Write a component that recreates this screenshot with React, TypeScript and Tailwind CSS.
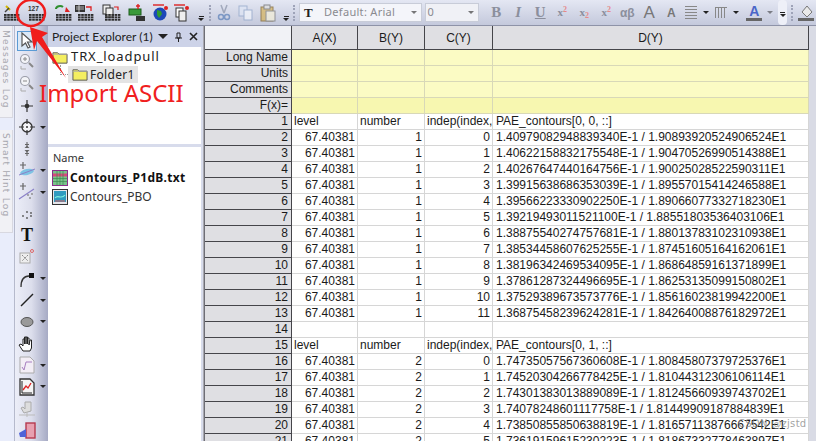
import React from "react";

const rows1 = [
  "1.40979082948839340E-1 / 1.90893920524906524E1",
  "1.40622158832175548E-1 / 1.90470526990514388E1",
  "1.40267647440164756E-1 / 1.90025028522590311E1",
  "1.39915638686353039E-1 / 1.89557015414246588E1",
  "1.39566223330902250E-1 / 1.89066077332718230E1",
  "1.39219493011521100E-1 / 1.88551803536403106E1",
  "1.38875540274757681E-1 / 1.88013783102310938E1",
  "1.38534458607625255E-1 / 1.87451605164162061E1",
  "1.38196342469534095E-1 / 1.86864859161371899E1",
  "1.37861287324496695E-1 / 1.86253135099150802E1",
  "1.37529389673573776E-1 / 1.85616023819942200E1",
  "1.36875458239624281E-1 / 1.84264008876182972E1",
];

const rows2 = [
  "1.74735057567360608E-1 / 1.80845807379725376E1",
  "1.74520304266778425E-1 / 1.81044312306106114E1",
  "1.74301383013889089E-1 / 1.81245660939743702E1",
  "1.74078248601117758E-1 / 1.81449909187884839E1",
  "1.73850855850638819E-1 / 1.81657113876667542E1",
  "1.73619159615230223E-1 / 1.81867332778463897E1",
];

function Row({ head, a, b, c, d, textA }: { head: string; a?: string; b?: string; c?: string; d?: string; textA?: boolean }) {
  const align = textA ? "text-left pl-[2px]" : "text-right pr-[2px]";
  return (
    <div className="flex h-[16px] leading-[15px] text-[12px] text-[#1a1a1a]">
      <div className="w-[87px] shrink-0 bg-[#dfdfe3] border-b border-r border-[#45454a] text-right pr-[3px]">{head}</div>
      <div className={`w-[66px] shrink-0 border-b border-r border-[#d6d6d6] ${align} whitespace-nowrap`}>{a}</div>
      <div className={`w-[67px] shrink-0 border-b border-r border-[#d6d6d6] ${align} whitespace-nowrap`}>{b}</div>
      <div className={`w-[68px] shrink-0 border-b border-r border-[#d6d6d6] ${align} whitespace-nowrap overflow-hidden`}>{c}</div>
      <div className="w-[316px] shrink-0 border-b border-r border-[#d6d6d6] pl-[3px] whitespace-nowrap overflow-hidden">{d}</div>
      <div className="flex-1 bg-[#d9dbe5]" />
    </div>
  );
}

function LabelRow({ head, strong }: { head: string; strong?: boolean }) {
  const cell = `shrink-0 border-b border-r border-[#d8d8b8] ${strong ? "bg-[#f7f7b0]" : "bg-[#fbfbc4]"}`;
  return (
    <div className="flex h-[16px] leading-[15px] text-[#1a1a1a]">
      <div className="w-[87px] shrink-0 bg-[#dfdfe3] border-b border-r border-[#45454a] text-right pr-[3px] text-[12px]">{head}</div>
      <div className={`w-[66px] ${cell}`} />
      <div className={`w-[67px] ${cell}`} />
      <div className={`w-[68px] ${cell}`} />
      <div className={`w-[316px] ${cell}`} />
      <div className="flex-1 bg-[#d9dbe5]" />
    </div>
  );
}

function ColHead({ label, w }: { label: string; w: string }) {
  return (
    <div className={`${w} shrink-0 bg-[#dfdfe3] border-b border-r border-[#45454a] flex items-center justify-center text-[12px] text-[#1a1a1a]`}>
      {label}
    </div>
  );
}

function MiniGrid({ x = 2, y = 11 }: { x?: number; y?: number }) {
  return (
    <g fill="#2d2d2d">
      {[0, 1, 2].map((r) =>
        [0, 1, 2, 3, 4].map((c) => <rect key={`${r}-${c}`} x={x + c * 3.2} y={y + r * 2.4} width="2.6" height="1.9" />),
      )}
    </g>
  );
}

function Ico({ children, className = "" }: { children: React.ReactNode; className?: string }) {
  return (
    <svg width="20" height="20" viewBox="0 0 20 20" className={`shrink-0 ${className}`}>
      {children}
    </svg>
  );
}

function Caret() {
  return <div className="w-0 h-0 border-x-[3px] border-x-transparent border-t-[3px] border-t-[#222]" />;
}

function Gripper() {
  return <div className="w-[2px] h-[16px] shrink-0 border-l-2 border-dotted border-[#9ea3b8]" />;
}

function Overflow({ className = "" }: { className?: string }) {
  return (
    <div className={`flex flex-col items-center gap-[1px] mt-[12px] ${className}`}>
      <div className="w-[5px] h-[1px] bg-[#222]" />
      <Caret />
    </div>
  );
}

function ToolSlot({ children, caret, selected }: { children: React.ReactNode; caret?: boolean; selected?: boolean }) {
  return (
    <div className="h-[22px] flex items-center relative pl-[2px]">
      <div className={`w-[20px] h-[20px] flex items-center justify-center ${selected ? "border border-[#5b9bd5] bg-[#dbe8f6]" : ""}`}>{children}</div>
      {caret && (
        <div className="ml-[3px]">
          <Caret />
        </div>
      )}
    </div>
  );
}

function TopToolbar() {
  return (
    <div className="h-[26px] shrink-0 flex items-center bg-gradient-to-b from-[#e4e7f3] to-[#c4c9dc] border-b border-[#8e93a8] overflow-hidden">
      <div className="flex items-center pl-[2px]">
        <Ico>
          <path d="M4 3 L8 7" stroke="#d4b800" strokeWidth="2" />
          <path d="M3 9 L7 5" stroke="#444" strokeWidth="1.5" />
          <MiniGrid x={2} y={11} />
        </Ico>
        <Ico className="ml-[5px]">
          <text x="1" y="8" fontSize="6.5" fontWeight="700" fill="#333" fontFamily="Liberation Sans, sans-serif">127</text>
          <MiniGrid x={2} y={11} />
        </Ico>
        <Ico className="ml-[6px]">
          <path d="M3 6 a4 3 0 0 1 7 -2" fill="none" stroke="#2f8f2f" strokeWidth="2" />
          <path d="M13 4 L17 9 L12 9Z" fill="#d22" />
          <MiniGrid x={3} y={11} />
        </Ico>
        <Ico className="ml-[1px]">
          <rect x="1" y="2" width="10" height="7" fill="#333" />
          <path d="M2 4h8M2 6h8M5 2v7" stroke="#eee" strokeWidth=".7" />
          <path d="M12 4h5v4" fill="none" stroke="#d22" strokeWidth="1.3" />
          <MiniGrid x={4} y={11} />
        </Ico>
        <Ico className="ml-[7px]">
          <rect x="2" y="2" width="7" height="9" fill="#eee" stroke="#333" />
          <rect x="5" y="5" width="7" height="9" fill="#eee" stroke="#333" />
          <path d="M13 4h4v3" fill="none" stroke="#d22" strokeWidth="1.2" />
          <MiniGrid x={4} y={11} />
        </Ico>
        <Ico className="ml-[7px]">
          <rect x="1" y="6" width="12" height="6" fill="#3a9a3a" stroke="#1d5c1d" />
          <rect x="8" y="13" width="9" height="5" fill="#333" />
          <path d="M10 1v5M8 3h4" stroke="#d22" strokeWidth="1.4" />
        </Ico>
        <Ico className="ml-[3px]">
          <circle cx="9" cy="11" r="6.500" fill="#1c49b8" />
          <path d="M6 7l4 1 1 3-3 4-2-3z" fill="#2f9a2f" />
          <path d="M2 2h11" stroke="#d22" strokeWidth="1.4" />
          <circle cx="15" cy="5" r="2" fill="#d22" />
        </Ico>
        <Ico className="ml-[1px]">
          <rect x="4" y="5" width="7" height="9" fill="#fff" stroke="#333" />
          <rect x="7" y="8" width="7" height="10" fill="#eee" stroke="#333" />
          <path d="M2 2h11" stroke="#d22" strokeWidth="1.4" />
          <circle cx="15" cy="5" r="2" fill="#d22" />
        </Ico>
        <Overflow className="ml-[6px]" />
      </div>
      <div className="ml-[5px]">
        <Gripper />
      </div>
      <div className="flex items-center ml-[3px] gap-[2px] opacity-70">
        <Ico>
          <path d="M7 2l3 8M13 2l-3 8" stroke="#8a93a8" strokeWidth="1.5" />
          <circle cx="7" cy="14" r="2.500" fill="none" stroke="#5a7fb8" strokeWidth="1.5" />
          <circle cx="13" cy="14" r="2.500" fill="none" stroke="#5a7fb8" strokeWidth="1.5" />
        </Ico>
        <Ico>
          <rect x="3" y="3" width="8" height="10" fill="#dfe6f5" stroke="#8ea3c8" />
          <rect x="8" y="7" width="8" height="10" fill="#f3f6fc" stroke="#8ea3c8" />
        </Ico>
        <Ico>
          <rect x="3" y="4" width="12" height="14" fill="#d6b35a" stroke="#7a5d20" />
          <rect x="6" y="2" width="6" height="4" fill="#ddd" stroke="#666" />
          <rect x="8" y="8" width="9" height="10" fill="#f5f0d8" stroke="#777" />
        </Ico>
      </div>
      <Overflow className="ml-[5px]" />
      <div className="ml-[4px]">
        <Gripper />
      </div>
      <div className="ml-[4px] w-[126px] h-[19px] bg-[#f4f5fa] border border-[#c8ccd8] flex items-center text-[11px] text-[#8a8a90] font-['Noto_Sans',sans-serif]">
        <span className="w-[20px] ml-[4px] font-['Liberation_Serif',serif] font-bold text-[13px] text-[#222]">T</span>
        <span className="flex-1 tracking-[0.3px]">Default: Arial</span>
        <div className="mr-[4px] opacity-60">
          <Caret />
        </div>
      </div>
      <div className="ml-[3px] w-[56px] h-[19px] bg-[#f0f1f6] border border-[#c8ccd8] flex items-center justify-between pl-[2px] pr-[4px] text-[11px] text-[#8a8a90]">
        0
        <div className="opacity-60">
          <Caret />
        </div>
      </div>
      <div className="flex items-center ml-[6px] text-[#8b8f9d] font-['Liberation_Serif',serif] font-bold">
        <span className="w-[22px] text-center text-[15px]">B</span>
        <span className="w-[22px] text-center text-[15px] italic">I</span>
        <span className="w-[22px] text-center text-[15px] underline">U</span>
        <span className="w-[22px] text-center text-[11px]">x<sup className="text-[#e58a8a] text-[8px]">2</sup></span>
        <span className="w-[22px] text-center text-[11px]">x<sub className="text-[#e58a8a] text-[8px]">2</sub></span>
        <span className="w-[22px] text-center text-[11px]">x<sup className="text-[#e58a8a] text-[8px]">2</sup></span>
        <span className="w-[20px] text-center text-[12px] font-['Liberation_Sans',sans-serif]">αβ</span>
        <span className="w-[24px] text-center text-[17px] text-[#777] font-['Liberation_Sans',sans-serif] font-normal">A</span>
        <span className="w-[20px] text-center text-[12px] text-[#777] font-['Liberation_Sans',sans-serif]">A</span>
      </div>
      <div className="flex items-center ml-[4px] gap-[6px]">
        <div className="flex flex-col gap-[2px] w-[12px]">
          <div className="h-[1px] bg-[#888]" />
          <div className="h-[1px] bg-[#888]" />
          <div className="h-[1px] bg-[#888]" />
          <div className="h-[1px] bg-[#888]" />
          <div className="h-[1px] bg-[#888]" />
        </div>
        <Caret />
      </div>
      <div className="flex items-center ml-[6px] gap-[6px]">
        <div className="w-[12px] h-[11px] border-t border-[#888] bg-[repeating-linear-gradient(90deg,#888_0,#888_1px,transparent_1px,transparent_3px)]" />
        <Caret />
      </div>
      <div className="flex items-center ml-[7px] gap-[5px]">
        <div className="flex flex-col items-center">
          <span className="text-[14px] leading-[13px] font-bold text-[#4a66c8] font-['Liberation_Sans',sans-serif]">A</span>
          <div className="w-[16px] h-[3px] bg-[#666]" />
        </div>
        <div className="opacity-50">
          <Caret />
        </div>
      </div>
      <div className="ml-[5px] w-[9px] h-full flex justify-center rounded-sm bg-[#eef0f8]">
        <Overflow />
      </div>
      <div className="ml-[4px]">
        <Gripper />
      </div>
      <Ico className="ml-[3px]">
        <path d="M6 9l5-6 5 6-5 5z" fill="#e9e9e9" stroke="#777" />
        <rect x="2" y="15" width="16" height="3" fill="#666" />
      </Ico>
    </div>
  );
}

function SideToolbar() {
  const bar = "#333";
  return (
    <div className="w-[34px] shrink-0 flex flex-col pt-[4px] bg-gradient-to-r from-[#eceef8] via-[#dcdeec] to-[#a6aac4] border-l border-[#b6bacc] overflow-hidden">
      <ToolSlot selected>
        <svg width="16" height="18" viewBox="0 0 16 18">
          <path d="M3 1 L3 14 L6.500 11 L9 16 L11 15 L8.500 10 L13 10 Z" fill="#fff" stroke="#555" strokeWidth="1.2" />
        </svg>
      </ToolSlot>
      <ToolSlot>
        <Ico>
          <circle cx="8" cy="7" r="4.500" fill="#f3f4f8" stroke="#9a9da8" strokeWidth="1.2" />
          <path d="M6 7h4M8 5v4" stroke="#888" />
          <path d="M12 11l4 4" stroke="#888" strokeWidth="2" />
          <path d="M4 14v3h5" fill="none" stroke="#aaa" />
        </Ico>
      </ToolSlot>
      <ToolSlot>
        <Ico>
          <circle cx="8" cy="7" r="4.500" fill="#f3f4f8" stroke="#9a9da8" strokeWidth="1.2" />
          <path d="M6 7h4" stroke="#888" />
          <path d="M12 11l4 4" stroke="#888" strokeWidth="2" />
          <path d="M4 14v3h5" fill="none" stroke="#aaa" />
        </Ico>
      </ToolSlot>
      <ToolSlot>
        <Ico>
          <path d="M10 4v12M4 10h12" stroke={bar} strokeWidth="1.2" />
          <circle cx="10" cy="10" r="2.300" fill={bar} />
        </Ico>
      </ToolSlot>
      <ToolSlot caret>
        <Ico>
          <circle cx="10" cy="10" r="5" fill="#f4f4f8" stroke={bar} strokeWidth="1.3" />
          <path d="M10 2v5M10 13v5M2 10h5M13 10h5" stroke={bar} strokeWidth="1.2" />
          <circle cx="10" cy="10" r="1" fill={bar} />
        </Ico>
      </ToolSlot>
      <ToolSlot>
        <Ico>
          <path d="M10 3v5M8 5.500h4M10 12v5M8 14.500h4" stroke="#666" strokeWidth="1.1" />
          <path d="M7.500 9h5L10 6.500zM7.500 11h5L10 13.500z" fill="#666" />
        </Ico>
      </ToolSlot>
      <ToolSlot caret>
        <Ico>
          <path d="M6 1v7M3 4h6" stroke="#666" strokeWidth="1.2" />
          <ellipse cx="10" cy="11" rx="7" ry="3" fill="#7ec3e4" transform="rotate(-12 10 11)" />
          <path d="M2 14l16-6" stroke="#8a80c8" />
        </Ico>
      </ToolSlot>
      <ToolSlot caret>
        <Ico>
          <path d="M6 1v7M3 4h6" stroke="#666" strokeWidth="1.2" />
          <path d="M2 17l15-10" stroke="#8a80c8" strokeWidth="1.1" />
          <circle cx="11" cy="13" r=".9" fill="#888" />
          <circle cx="15" cy="12" r=".9" fill="#888" />
          <circle cx="13" cy="16" r=".9" fill="#888" />
        </Ico>
      </ToolSlot>
      <ToolSlot>
        <Ico>
          <circle cx="6" cy="12" r=".9" fill="#555" />
          <circle cx="10" cy="8" r=".9" fill="#555" />
          <circle cx="10" cy="14" r=".9" fill="#555" />
          <circle cx="14" cy="9" r=".9" fill="#555" />
          <circle cx="14" cy="12" r=".9" fill="#555" />
        </Ico>
      </ToolSlot>
      <ToolSlot>
        <span className="font-['Liberation_Serif',serif] font-bold text-[18px] leading-none text-[#111]">T</span>
      </ToolSlot>
      <ToolSlot>
        <Ico>
          <rect x="3" y="6" width="10" height="10" fill="#eee" stroke="#aaa" />
          <path d="M5 8l6 6M11 8l-6 6" stroke="#888" strokeDasharray="2 1" />
          <circle cx="15" cy="4" r="1.500" fill="none" stroke="#d66" />
        </Ico>
      </ToolSlot>
      <ToolSlot caret>
        <Ico>
          <path d="M4 18c0-7 3-11 8-11" fill="none" stroke="#333" strokeWidth="1.3" />
          <rect x="12" y="4" width="5" height="5" fill="#111" />
        </Ico>
      </ToolSlot>
      <ToolSlot caret>
        <Ico>
          <path d="M4 16L16 4" stroke="#222" strokeWidth="1.4" />
        </Ico>
      </ToolSlot>
      <ToolSlot caret>
        <Ico>
          <ellipse cx="10" cy="10" rx="6" ry="4.500" fill="#9a9a9a" stroke="#555" />
        </Ico>
      </ToolSlot>
      <ToolSlot>
        <Ico>
          <path d="M6 17l-4-6 2-1 2 2V5h1.500v5V3H9v7V3h1.500v7V4H12v7l1-5h1.500v8l-1.500 3z" fill="#fff" stroke="#222" strokeWidth="1" />
        </Ico>
      </ToolSlot>
      <ToolSlot caret>
        <Ico>
          <path d="M3 2h10l4 4v12H3z" fill="#f3eef6" stroke="#aaa" />
          <path d="M5 12l2 3 2-8h6" fill="none" stroke="#a77ec0" />
        </Ico>
      </ToolSlot>
      <ToolSlot caret>
        <Ico>
          <path d="M3 2h10l4 4v12H3z" fill="#f4f4f4" stroke="#333" strokeWidth="1.3" />
          <path d="M5 4v12h10" fill="none" stroke="#222" />
          <path d="M6 13l3-4 2 2 3-5" fill="none" stroke="#d22" strokeWidth="1.3" />
        </Ico>
      </ToolSlot>
      <ToolSlot>
        <Ico>
          <path d="M7 15l-3-5 2-1 2 2V4h6v9z" fill="#ddd" stroke="#aaa" />
          <path d="M2 17h16M10 14v5" stroke="#bbb" />
        </Ico>
      </ToolSlot>
      <ToolSlot>
        <Ico>
          <rect x="9" y="3" width="9" height="15" fill="#e7a0b0" stroke="#b5394f" strokeWidth="1.4" />
          <path d="M2 13l7-4v8H3z" fill="#4f63d8" />
        </Ico>
      </ToolSlot>
    </div>
  );
}

function FolderIcon() {
  return (
    <svg width="16" height="13" viewBox="0 0 17 13" className="shrink-0">
      <path d="M1 3V1.500h5L7.500 3H16v9.500H1z" fill="#f4ee60" stroke="#555" strokeWidth="1" />
      <path d="M1 3h15" stroke="#aaa" strokeWidth="1" />
    </svg>
  );
}

function Explorer() {
  return (
    <div className="w-[156px] shrink-0 flex flex-col bg-[#d8dcec] font-['Noto_Sans',sans-serif] text-[#222] border-r border-[#a8a8b0]">
      <div className="h-[21px] shrink-0 flex items-center pl-[4px] pr-[5px] bg-[#cdd3e8] text-[12px] font-['Lato',sans-serif]">
        <span className="flex-1 whitespace-nowrap">Project Explorer (1)</span>
        <div className="flex items-center gap-[6px]">
          <div className="w-0 h-0 border-x-[5px] border-x-transparent border-t-[5px] border-t-[#222]" />
          <svg width="9" height="10" viewBox="0 0 9 10">
            <path d="M3 1h3v5H3zM1 6h7M4.500 6v4" fill="none" stroke="#222" />
          </svg>
          <svg width="9" height="9" viewBox="0 0 9 9">
            <path d="M1 1l7 7M8 1l-7 7" stroke="#222" strokeWidth="1.6" />
          </svg>
        </div>
      </div>
      <div className="h-[97px] shrink-0 bg-white mr-[2px] pt-[1px] pl-[4px]">
        <div className="flex items-center gap-[3px] h-[18px] text-[13px] tracking-[0.9px]">
          <FolderIcon />
          <span>TRX_loadpull</span>
        </div>
        <div className="flex items-center h-[17px] ml-[8px] text-[12px] tracking-[0.3px]">
          <div className="w-[8px] h-[10px] -mt-[10px] border-l border-b border-dotted border-[#999]" />
          <div className="flex items-center gap-[2px] bg-[#e4e4e4] pl-[4px] pr-[3px] h-[17px]">
            <FolderIcon />
            <span>Folder1</span>
          </div>
        </div>
      </div>
      <div className="h-[3px] shrink-0" />
      <div className="flex-1 bg-white mr-[2px] pl-[4px] text-[12px]">
        <div className="h-[21px] pl-[1px] pt-[3px] leading-[16px] text-[11px] text-[#333]">Name</div>
        <div className="flex items-center gap-[2px] h-[20px]">
          <svg width="16" height="16" viewBox="0 0 16 16" className="shrink-0">
            <rect x=".5" y=".5" width="15" height="15" fill="#7bc48a" stroke="#8a2f8a" />
            <path d="M1 5h14" stroke="#d84a7a" strokeWidth="3" />
            <path d="M1 8.500h14M1 11.500h14M5 1v14M8 1v14M11 1v14" stroke="#3e8a50" strokeWidth=".7" />
          </svg>
          <span className="font-bold text-[12px] text-[#111] tracking-[0.3px]">Contours_P1dB.txt</span>
        </div>
        <div className="flex items-center gap-[2px] h-[18px]">
          <svg width="16" height="16" viewBox="0 0 16 16" className="shrink-0">
            <rect x=".5" y=".5" width="15" height="15" fill="#e5e5ea" stroke="#333" />
            <rect x="2" y="2" width="12" height="11" fill="#2f9bc0" />
            <path d="M3 9c3-4 6 2 10-3" fill="none" stroke="#7ef0e0" strokeWidth="1.2" />
            <path d="M3 12h10" stroke="#e05a5a" />
          </svg>
          <span className="text-[12px] text-[#333]">Contours_PBO</span>
        </div>
      </div>
    </div>
  );
}

function Worksheet() {
  return (
    <div className="flex-1 flex flex-col min-w-0 bg-white font-['Liberation_Sans',sans-serif] overflow-hidden">
      <div className="flex h-[24px] shrink-0">
        <div className="w-[87px] shrink-0 bg-[#f1f2f6] border-b border-r border-[#45454a]" />
        <ColHead label="A(X)" w="w-[66px]" />
        <ColHead label="B(Y)" w="w-[67px]" />
        <ColHead label="C(Y)" w="w-[68px]" />
        <ColHead label="D(Y)" w="w-[316px]" />
        <div className="flex-1 bg-[#d9dbe5]" />
      </div>
      <LabelRow head="Long Name" />
      <LabelRow head="Units" />
      <LabelRow head="Comments" />
      <LabelRow head="F(x)=" strong />
      <Row head="1" a="level" b="number" c="indep(index," d="PAE_contours[0, 0, ::]" textA />
      {rows1.map((d, i) => (
        <Row key={i} head={String(i + 2)} a="67.40381" b="1" c={String(i)} d={d} />
      ))}
      <Row head="14" />
      <Row head="15" a="level" b="number" c="indep(index," d="PAE_contours[0, 1, ::]" textA />
      {rows2.map((d, i) => (
        <Row key={i} head={String(i + 16)} a="67.40381" b="2" c={String(i)} d={d} />
      ))}
    </div>
  );
}

export default function App() {
  return (
    <div className="relative w-[816px] h-[441px] overflow-hidden flex flex-col bg-[#e9edfb]">
      <TopToolbar />
      <div className="flex-1 flex min-h-0">
        {/* docked log tabs */}
        <div className="w-[14px] shrink-0 flex flex-col text-[9px] text-[#a8a8b0] font-['DejaVu_Sans',sans-serif]">
          <div className="h-[92px] w-[13px] bg-[#f1f1f5] border-b border-r border-[#d8d8e0] pt-[4px] [writing-mode:vertical-rl] tracking-[1.3px] whitespace-nowrap leading-[12px]">
            Messages Log
          </div>
          <div className="h-[12px]" />
          <div className="h-[103px] w-[13px] bg-[#f1f1f5] border-b border-r border-[#d8d8e0] pt-[3px] [writing-mode:vertical-rl] tracking-[1.2px] whitespace-nowrap leading-[12px]">
            Smart Hint Log
          </div>
        </div>
        <SideToolbar />
        <Explorer />
        <div className="w-[1px] shrink-0 bg-[#6e6e76]" />
        <Worksheet />
      </div>

      {/* annotation over the screenshot */}
      <svg width="70" height="82" viewBox="0 0 70 82" className="absolute left-0 top-0 pointer-events-none">
        <ellipse cx="31" cy="13" rx="14" ry="13" fill="none" stroke="#f01c1c" strokeWidth="2.500" />
        <path d="M30 27 L48 33 L42 37 L66 78 L37 41 L34 50 Z" fill="#f01c1c" />
      </svg>
      <div className="absolute left-[39px] top-[76px] text-[24px] leading-[34px] text-[#f02020] font-['Noto_Sans',sans-serif] whitespace-nowrap">
        Import ASCII
      </div>
      <div className="absolute left-[738px] top-[418px] text-[10px] leading-[12px] tracking-[0.3px] text-[#8a8a8a]/80 font-['DejaVu_Sans',sans-serif] whitespace-nowrap">
        CSDN @zjstd
      </div>
    </div>
  );
}
